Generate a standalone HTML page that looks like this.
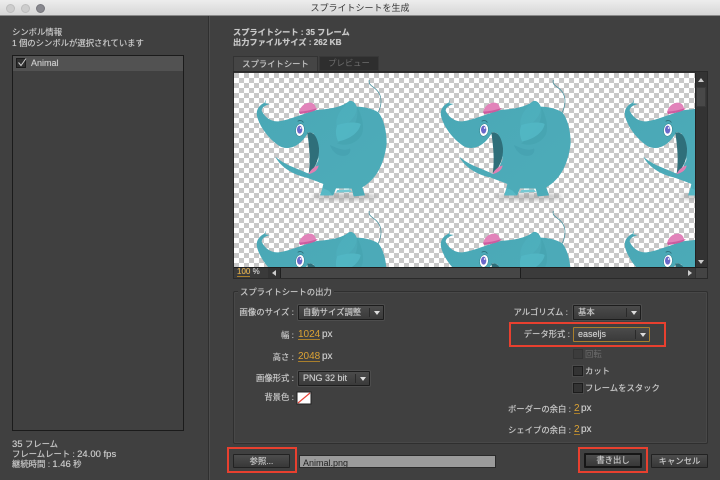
<!DOCTYPE html>
<html lang="ja"><head><meta charset="utf-8"><title>スプライトシートを生成</title>
<style>
html,body{margin:0;padding:0;background:#404040}
#w{position:relative;width:720px;height:480px;overflow:hidden;background:#404040;font-family:"Liberation Sans","Noto Sans CJK JP",sans-serif;font-size:8.35px;color:#c8c8c8;filter:blur(.3px);text-shadow:0 0 .5px #c8c8c8}
#w div{position:absolute;box-sizing:border-box}
.t{white-space:nowrap;line-height:12px;height:12px}
.r{text-align:right}
.n{font-size:9.5px}
#w .o{color:#dca334;text-shadow:none;border-bottom:1px solid #a97f2c;line-height:11px;height:11px;font-size:10px}
.px{font-size:10px}
.sel{background:linear-gradient(#4b4b4b,#3a3a3a);border:1px solid #1d1d1d;box-shadow:0 0 0 1px #4d4d4d;border-radius:1px}
.sel i{position:absolute;right:13px;top:2px;bottom:2px;width:1px;background:#2a2a2a}
.sel b{position:absolute;right:3.5px;top:5px;width:0;height:0;border:3px solid transparent;border-top:4px solid #ddd;border-bottom:0}
.cb{width:10px;height:10px;background:#333;border:1px solid #1c1c1c;box-shadow:0 0 0 1px #4a4a4a}
.btn{background:linear-gradient(#4c4c4c,#383838);border:1px solid #222;text-align:center;line-height:12px;border-radius:1px;white-space:nowrap}
.red{border:2px solid #e8402f}
</style></head><body>
<div id="w">
<div style="left:0;top:0;width:720px;height:16px;background:linear-gradient(#ededed,#d6d6d6);border-bottom:1px solid #8a8a8a"></div>
<div style="left:6px;top:4px;width:9px;height:9px;border-radius:50%;background:#cdcdcd;border:1px solid #bdbdbd"></div>
<div style="left:21px;top:4px;width:9px;height:9px;border-radius:50%;background:#cdcdcd;border:1px solid #bdbdbd"></div>
<div style="left:36px;top:4px;width:9px;height:9px;border-radius:50%;background:#88888e;border:1px solid #77777d"></div>
<div class="t" style="left:0;width:720px;top:2px;text-align:center;color:#333;font-size:9px;text-shadow:none">スプライトシートを生成</div>

<div style="left:208px;top:16px;width:2px;height:464px;background:#2f2f2f;border-right:1px solid #4d4d4d"></div>

<div class="t" style="left:12px;top:26px">シンボル情報</div>
<div class="t" style="left:12px;top:37px">1 個のシンボルが選択されています</div>
<div style="left:12px;top:55px;width:172px;height:376px;border:1px solid #1b1b1b;background:#404040"></div>
<div style="left:13px;top:56px;width:170px;height:15px;background:#525252"></div>
<div class="cb" style="left:16px;top:58px;background:#2f2f2f;box-shadow:none"></div>
<svg style="position:absolute;left:16px;top:56px" width="12" height="12" viewBox="0 0 12 12"><path d="M2.5 6.5L5 9.5L10 2.5" fill="none" stroke="#ccc" stroke-width="1"/></svg>
<div class="t" style="left:31px;top:57px;font-size:9px">Animal</div>
<div class="t" style="left:12px;top:438px"><span class="n">35</span> フレーム</div>
<div class="t" style="left:12px;top:448px">フレームレート : <span class="n">24.00 fps</span></div>
<div class="t" style="left:12px;top:458px">継続時間 : <span class="n">1.46</span> 秒</div>

<div class="t" style="left:233px;top:27px;font-weight:bold;font-size:8.2px">スプライトシート : 35 フレーム</div>
<div class="t" style="left:233px;top:37px;font-weight:bold;font-size:8.2px">出力ファイルサイズ : 262 KB</div>

<div class="t" style="left:233px;top:56px;width:85px;height:16px;background:#454545;border:1px solid #333;border-bottom:0;text-align:center;line-height:14px">スプライトシート</div>
<div class="t" style="left:319px;top:56px;width:60px;height:15px;background:#2e2e2e;border:1px solid #383838;text-align:center;line-height:13px;color:#6d6d6d;text-shadow:none">プレビュー</div>

<div style="left:233px;top:71px;width:475px;height:208px;background:#333;border:1px solid #2a2a2a"></div>
<svg style="position:absolute;left:234px;top:73px" width="461" height="194" viewBox="234 73 461 194">
<defs>
<pattern id="c" x="234" y="73" width="10" height="10" patternUnits="userSpaceOnUse"><rect width="10" height="10" fill="#fff"/><rect width="5" height="5" fill="#c8c8c8"/><rect x="5" y="5" width="5" height="5" fill="#c8c8c8"/></pattern>
<filter id="sb" x="-20%" y="-100%" width="140%" height="300%"><feGaussianBlur stdDeviation="6"/></filter>
<linearGradient id="bd" x1="0" y1="0" x2="1" y2="1"><stop offset="0" stop-color="#4aa8b6"/><stop offset="1" stop-color="#4dacb9"/></linearGradient>
<g id="e" transform="translate(250 80) scale(.3333)">
<ellipse cx="285" cy="350" rx="100" ry="10" fill="#999" opacity=".6" filter="url(#sb)"/>
<path d="M385 97C397 70 396 45 378 28C366 17 354 14 358 0" fill="none" stroke="#4f929f" stroke-width="2.5"/>
<path d="M60 72L46 70L49 57L44 68C26 76 16 92 22 112C32 145 58 178 88 198C110 210 140 205 165 172L176 156L190 160L205 200L205 240L195 262L178 282L150 270C120 258 95 248 76 230C90 260 130 285 170 293C195 302 210 308 220 312L212 346L250 346L258 325L305 326L311 349L345 346L337 322C372 302 402 262 410 190C410 150 400 115 385 97C365 85 340 80 320 80C315 66 305 60 296 64C280 78 250 86 200 90C160 100 120 120 85 124C60 126 42 108 35 92C36 82 44 76 60 72Z" fill="url(#bd)"/>
<path d="M320 78C326 100 322 130 300 152C285 170 270 185 262 190C290 200 320 190 335 165C345 140 335 105 320 78Z" fill="#429dab" opacity=".4"/>
<path d="M296 66C305 62 315 68 320 80C322 105 305 125 265 150C250 130 262 95 296 66Z" fill="#50b4c1" opacity=".5"/>
<path d="M262 135C285 128 318 124 332 132C328 158 295 180 264 184C256 165 256 150 262 135Z" fill="#52b7c4" opacity=".9"/>
<path d="M240 195C260 205 285 215 300 205C305 220 290 232 270 226C255 222 245 210 240 195Z" fill="#419cab" opacity=".5"/>
<path d="M172 158C178 200 182 240 176 282C198 262 208 235 207 205C204 175 192 152 172 158Z" fill="#2f6f7a"/>
<path d="M176 282C182 268 193 260 206 256C204 268 195 278 176 282Z" fill="#e07fb3"/>
<path d="M210 346L218 324L236 332L248 346Z" fill="#57b8c5"/>
<path d="M262 330L300 328L306 336L258 338Z" fill="#74c9d4"/>
<path d="M148 95C150 80 165 68 180 68C192 68 198 78 198 88C182 92 165 96 148 99Z" fill="#e283ba"/>
<path d="M147 95C165 94 185 90 203 84C200 92 182 98 150 102Z" fill="#cc5c9f"/>
<ellipse cx="150" cy="150" rx="13" ry="19" fill="#fff" stroke="#2d7d8a" stroke-width="1.5" transform="rotate(8 150 150)"/>
<ellipse cx="149" cy="149" rx="8" ry="12" fill="#6a68c9"/>
<circle cx="152" cy="144" r="2.5" fill="#fff"/>
<path d="M143 124C150 119 158 122 160 128" fill="none" stroke="#2f6f7a" stroke-width="2.5"/>
</g>
</defs>
<rect x="234" y="73" width="461" height="194" fill="url(#c)"/>
<use href="#e"/>
<use href="#e" transform="translate(184 0)"/>
<use href="#e" transform="translate(368 0)"/>
<use href="#e" transform="translate(0 131)"/>
<use href="#e" transform="translate(184 131)"/>
<use href="#e" transform="translate(368 131)"/>
</svg>
<div style="left:695px;top:73px;width:11px;height:194px;background:#333;border-left:1px solid #222"></div>
<div style="left:696px;top:87px;width:10px;height:20px;background:#484848;border:1px solid #3a3a3a"></div>
<div style="left:698px;top:78px;width:0;height:0;border:3.5px solid transparent;border-bottom:4px solid #ccc;border-top:0"></div>
<div style="left:698px;top:260px;width:0;height:0;border:3.5px solid transparent;border-top:4px solid #ccc;border-bottom:0"></div>
<div style="left:234px;top:267px;width:473px;height:1px;background:#1d1d1d"></div>
<div style="left:234px;top:268px;width:34px;height:10px;background:#3a3a3a"></div>
<div class="t" style="left:237px;top:267px;font-size:8px;height:11px;line-height:10px"><span style="color:#dca334;border-bottom:1px solid #a97f2c">100</span> %</div>
<div style="left:268px;top:268px;width:13px;height:10px;background:#333;border-right:1px solid #1f1f1f"></div>
<div style="left:272px;top:270px;width:0;height:0;border:3.5px solid transparent;border-right:4px solid #ccc;border-left:0"></div>
<div style="left:281px;top:268px;width:240px;height:10px;background:#464646;border-right:1px solid #1c1c1c"></div>
<div style="left:521px;top:268px;width:174px;height:10px;background:#3b3b3b"></div>
<div style="left:688px;top:270px;width:0;height:0;border:3.5px solid transparent;border-left:4px solid #ccc;border-right:0"></div>
<div style="left:695px;top:268px;width:12px;height:10px;background:#444;border-left:1px solid #333"></div>

<div style="left:233px;top:291px;width:475px;height:153px;border:1px solid #2f2f2f;box-shadow:inset 0 0 0 1px #484848;border-radius:2px"></div>
<div class="t" style="left:238px;top:286px;background:#404040;padding:0 2px">スプライトシートの出力</div>

<div class="t r" style="right:426px;top:306px">画像のサイズ :</div>
<div class="sel" style="left:298px;top:305px;width:86px;height:15px"><i></i><b></b></div>
<div class="t" style="left:303px;top:306px">自動サイズ調整</div>
<div class="t r" style="right:426px;top:329px">幅 :</div>
<div class="t o" style="left:298px;top:329px">1024</div><div class="t px" style="left:322px;top:329px">px</div>
<div class="t r" style="right:426px;top:351px">高さ :</div>
<div class="t o" style="left:298px;top:351px">2048</div><div class="t px" style="left:322px;top:351px">px</div>
<div class="t r" style="right:426px;top:372px">画像形式 :</div>
<div class="sel" style="left:298px;top:371px;width:72px;height:15px"><i></i><b></b></div>
<div class="t" style="left:303px;top:372px;font-size:9px">PNG 32 bit</div>
<div class="t r" style="right:426px;top:391px">背景色 :</div>
<svg style="position:absolute;left:296px;top:391px" width="16" height="14" viewBox="0 0 16 14"><rect x=".5" y=".5" width="15" height="13" fill="#222"/><rect x="1.5" y="1.5" width="13" height="11" fill="#fff"/><path d="M2 12L14 2" stroke="#e8453a" stroke-width="1.2"/></svg>

<div class="t r" style="right:152px;top:306px">アルゴリズム :</div>
<div class="sel" style="left:573px;top:305px;width:68px;height:15px"><i></i><b></b></div>
<div class="t" style="left:578px;top:306px">基本</div>
<div class="red" style="left:509px;top:322px;width:157px;height:25px"></div>
<div class="t r" style="right:150px;top:328px">データ形式 :</div>
<div class="sel" style="left:573px;top:327px;width:77px;height:15px;border-color:#a97f2c;box-shadow:none"><i></i><b></b></div>
<div class="t" style="left:578px;top:328px;font-size:9px">easeljs</div>
<div class="cb" style="left:573px;top:349px;background:#3c3c3c;border-color:#333;box-shadow:none"></div>
<div class="t" style="left:585px;top:348px;color:#6d6d6d;text-shadow:none">回転</div>
<div class="cb" style="left:573px;top:366px"></div>
<div class="t" style="left:585px;top:365px">カット</div>
<div class="cb" style="left:573px;top:383px"></div>
<div class="t" style="left:585px;top:382px">フレームをスタック</div>
<div class="t r" style="right:149px;top:403px">ボーダーの余白 :</div>
<div class="t o" style="left:574px;top:403px">2</div><div class="t px" style="left:581px;top:403px">px</div>
<div class="t r" style="right:149px;top:424px">シェイプの余白 :</div>
<div class="t o" style="left:574px;top:424px">2</div><div class="t px" style="left:581px;top:424px">px</div>

<div class="red" style="left:227px;top:447px;width:70px;height:26px"></div>
<div class="btn" style="left:233px;top:454px;width:57px;height:14px">参照...</div>
<div style="left:299px;top:455px;width:197px;height:13px;background:#9b9b9b;border:1px solid #2a2a2a;overflow:hidden;color:#222;font-size:9px;line-height:14px;padding-left:3px;text-shadow:none">Animal.png</div>
<div class="red" style="left:578px;top:447px;width:70px;height:26px"></div>
<div class="btn" style="left:584px;top:453px;width:58px;height:15px;border:2px solid #161616;line-height:11px">書き出し</div>
<div class="btn" style="left:651px;top:454px;width:57px;height:14px">キャンセル</div>
</div>
</body></html>
